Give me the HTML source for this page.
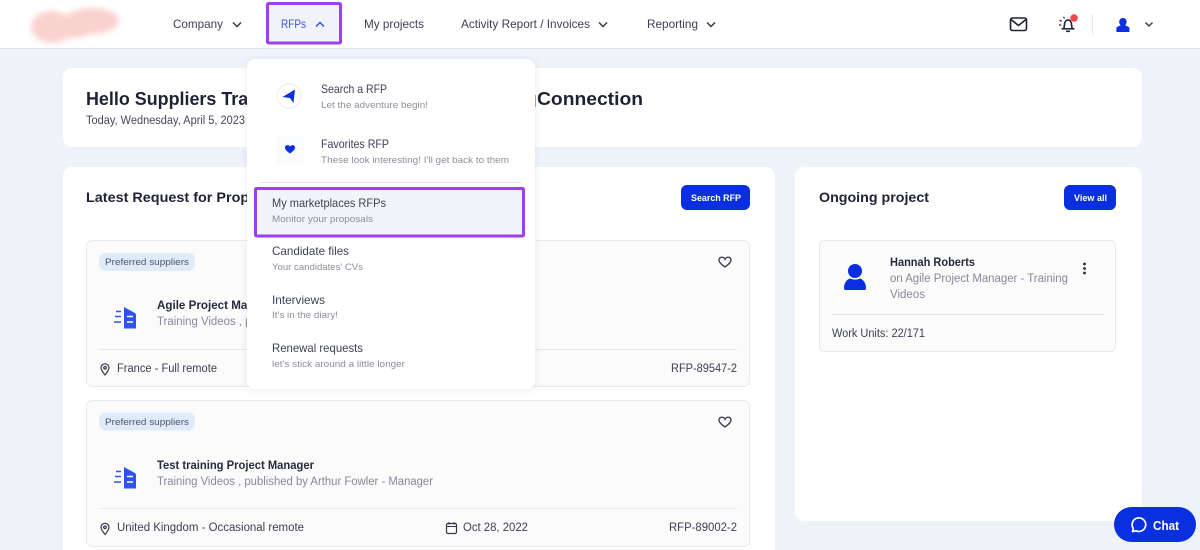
<!DOCTYPE html>
<html lang="en">
<head>
<meta charset="utf-8">
<title>RFPs</title>
<style>
html,body{margin:0;padding:0;width:1200px;height:550px;overflow:hidden;background:#eef3fa}
svg{display:block;font-family:"Liberation Sans",sans-serif}
.n{font-size:12px;fill:#3c3f55}
.t{font-size:12px;fill:#3f4258}
.s{font-size:9.5px;fill:#8b8e9c}
.h{font-size:14px;font-weight:bold;fill:#1f2233}
.b{font-size:11.5px;font-weight:bold;fill:#262a3c}
.g{font-size:11.5px;fill:#85889a}
.d{font-size:11.5px;fill:#3c3f55}
.w{font-size:9.5px;font-weight:bold;fill:#fff}
</style>
</head>
<body>
<svg width="1200" height="550" viewBox="0 0 1200 550" xmlns="http://www.w3.org/2000/svg">
<defs>
<filter id="bl" x="-30%" y="-50%" width="160%" height="200%"><feGaussianBlur stdDeviation="3"/></filter>
<filter id="sh" x="-10%" y="-10%" width="120%" height="120%"><feDropShadow dx="0" dy="1" stdDeviation="4" flood-color="#8a94b0" flood-opacity=".2"/></filter>
<g id="doc">
<path d="M19 0L29 5.500C30.500 6.300 31 7 31 8.500V21.500H19Z" fill="#2f55e6"/>
<path d="M22 9.500h6M22 15h6" stroke="#fff" stroke-width="1.500"/>
<path d="M11 4.500h5M10 9.500h6M9 15h7" stroke="#2f55e6" stroke-width="1.500" fill="none"/>
</g>
<path id="heart" d="M0 2.300C-1.500-.8-6-.3-6 3.200C-6 5.800-2.500 8 0 10C2.500 8 6 5.800 6 3.200C6-.3 1.500-.8 0 2.300Z" fill="none" stroke="#33364a" stroke-width="1.300"/>
<g id="pin" fill="none" stroke="#33364a" stroke-width="1.200"><path d="M0 10C-2.500 7-4 5-4 2.800A4 4 0 0 1 4 2.800C4 5 2.500 7 0 10Z"/><circle cx="0" cy="2.800" r="1.300"/></g>
</defs>

<rect width="1200" height="550" fill="#eef3fa"/>

<!-- header -->
<rect width="1200" height="48" fill="#fff"/>
<rect y="48" width="1200" height="1" fill="#dfe3ea"/>
<g filter="url(#bl)" fill="#f9d2cf">
<ellipse cx="52" cy="27" rx="21" ry="16"/>
<ellipse cx="92" cy="21" rx="27" ry="13"/>
<ellipse cx="70" cy="27" rx="28" ry="11"/>
</g>

<text class="n" x="173" y="28" textLength="50" lengthAdjust="spacingAndGlyphs">Company</text>
<path d="M233 22.500l4 4 4-4" fill="none" stroke="#33364a" stroke-width="1.500"/>
<rect x="267.500" y="3.500" width="73" height="39.500" rx="1" fill="#f1f3fb" stroke="#9b3ff0" stroke-width="3"/>
<text class="n" x="281" y="28" textLength="25" lengthAdjust="spacingAndGlyphs" style="fill:#3b50e8">RFPs</text>
<path d="M316 26.500l4-4 4 4" fill="none" stroke="#3b50e8" stroke-width="1.500"/>
<text class="n" x="364" y="28" textLength="60" lengthAdjust="spacingAndGlyphs">My projects</text>
<text class="n" x="461" y="28" textLength="129" lengthAdjust="spacingAndGlyphs">Activity Report / Invoices</text>
<path d="M599 22.500l4 4 4-4" fill="none" stroke="#33364a" stroke-width="1.500"/>
<text class="n" x="647" y="28" textLength="51" lengthAdjust="spacingAndGlyphs">Reporting</text>
<path d="M707 22.500l4 4 4-4" fill="none" stroke="#33364a" stroke-width="1.500"/>

<rect x="1010.500" y="18" width="16" height="12.500" rx="2" fill="none" stroke="#1f2233" stroke-width="1.600"/>
<path d="M1011 19.500l7.500 6 7.500-6" fill="none" stroke="#1f2233" stroke-width="1.600"/>
<path d="M1061.500 28.800h13M1063.500 28.800c1.200-2 .8-4 1.300-6 .5-1.900 2-2.800 3.200-2.800s2.700.9 3.200 2.800c.5 2 .1 4 1.300 6" fill="none" stroke="#2a2d40" stroke-width="1.700"/>
<path d="M1066 31.300h4" stroke="#2a2d40" stroke-width="1.600"/>
<path d="M1059.500 20l2.200 1.300M1059 25h2.300M1063.500 16.800l1 1.800" stroke="#2a2d40" stroke-width="1.200"/>
<circle cx="1074" cy="18" r="3.800" fill="#f04848"/>
<rect x="1092" y="14" width="1" height="21" fill="#e4e7ee"/>
<path d="M1123 18c2.200 0 3.600 1.700 3.600 3.900 0 1.400-.6 2.600-1.400 3.300l3.300 1.700c.6.300.9.800.9 1.500V32h-13v-3.600c0-.7.300-1.200.9-1.500l3.300-1.700c-.8-.7-1.400-1.900-1.400-3.300 0-2.200 1.600-3.900 3.800-3.900z" fill="#0a2fe0"/>
<path d="M1145.500 22.500l3.500 3.500 3.500-3.500" fill="none" stroke="#33364a" stroke-width="1.400"/>

<!-- welcome card -->
<rect x="63" y="68" width="1079" height="79" rx="9" fill="#fff"/>
<text x="86" y="105" font-size="18" font-weight="bold" fill="#1f2233" textLength="205" lengthAdjust="spacingAndGlyphs">Hello Suppliers Training</text>
<text x="537" y="105" font-size="18" font-weight="bold" fill="#1f2233" textLength="106" lengthAdjust="spacingAndGlyphs">Connection</text>
<rect x="534.500" y="95" width="1" height="12" fill="#3b4a8a"/>
<text x="86" y="124" font-size="11.500" fill="#44475a" textLength="159" lengthAdjust="spacingAndGlyphs">Today, Wednesday, April 5, 2023</text>

<!-- left panel -->
<rect x="63" y="167" width="712" height="400" rx="9" fill="#fff"/>
<text class="h" x="86" y="202" textLength="200" lengthAdjust="spacingAndGlyphs">Latest Request for Proposals</text>
<rect x="681" y="185" width="69" height="25" rx="6" fill="#0a2fe0"/>
<text class="w" x="691" y="201" textLength="50" lengthAdjust="spacingAndGlyphs">Search RFP</text>

<!-- rfp card 1 -->
<rect x="86.500" y="240.500" width="663" height="146" rx="6" fill="#fbfbfc" stroke="#e6e9f0"/>
<rect x="99" y="253" width="96" height="18" rx="7" fill="#dfeafb"/>
<text x="105" y="265" font-size="9.500" fill="#50546a" textLength="84" lengthAdjust="spacingAndGlyphs">Preferred suppliers</text>
<use href="#heart" x="725" y="257"/>
<use href="#doc" x="105" y="307"/>
<text class="b" x="157" y="309" textLength="122" lengthAdjust="spacingAndGlyphs">Agile Project Manager</text>
<text class="g" x="157" y="325" textLength="137" lengthAdjust="spacingAndGlyphs">Training Videos , published</text>
<rect x="99" y="349" width="638" height="1" fill="#e4e7ee"/>
<use href="#pin" x="105" y="365"/>
<text class="d" x="117" y="372" textLength="100" lengthAdjust="spacingAndGlyphs">France - Full remote</text>
<text class="d" x="671" y="372" textLength="66" lengthAdjust="spacingAndGlyphs">RFP-89547-2</text>

<!-- rfp card 2 -->
<rect x="86.500" y="400.500" width="663" height="146" rx="6" fill="#fbfbfc" stroke="#e6e9f0"/>
<rect x="99" y="412.500" width="96" height="18" rx="7" fill="#dfeafb"/>
<text x="105" y="425" font-size="9.500" fill="#50546a" textLength="84" lengthAdjust="spacingAndGlyphs">Preferred suppliers</text>
<use href="#heart" x="725" y="417"/>
<use href="#doc" x="105" y="467"/>
<text class="b" x="157" y="469" textLength="157" lengthAdjust="spacingAndGlyphs">Test training Project Manager</text>
<text class="g" x="157" y="485" textLength="276" lengthAdjust="spacingAndGlyphs">Training Videos , published by Arthur Fowler - Manager</text>
<rect x="99" y="508" width="638" height="1" fill="#e4e7ee"/>
<use href="#pin" x="105" y="524.500"/>
<text class="d" x="117" y="531" textLength="187" lengthAdjust="spacingAndGlyphs">United Kingdom - Occasional remote</text>
<rect x="446.500" y="523.500" width="10" height="10" rx="1.500" fill="none" stroke="#33364a" stroke-width="1.200"/>
<path d="M446.500 526.500h10M449 522v2.500M454 522v2.500" stroke="#33364a" stroke-width="1.100"/>
<text class="d" x="463" y="531" textLength="65" lengthAdjust="spacingAndGlyphs">Oct 28, 2022</text>
<text class="d" x="669" y="531" textLength="68" lengthAdjust="spacingAndGlyphs">RFP-89002-2</text>

<!-- right panel -->
<rect x="795" y="167" width="347" height="354" rx="9" fill="#fff"/>
<text class="h" x="819" y="202" textLength="110" lengthAdjust="spacingAndGlyphs">Ongoing project</text>
<rect x="1064" y="185" width="52" height="25" rx="6" fill="#0a2fe0"/>
<text class="w" x="1074" y="201" textLength="33" lengthAdjust="spacingAndGlyphs">View all</text>
<rect x="819.500" y="240.500" width="296" height="111" rx="5" fill="#fbfbfc" stroke="#e6e9f0"/>
<circle cx="855" cy="271" r="7" fill="#0a2fe0"/>
<path d="M846 290c-1.300 0-2-.6-2-1.800 0-5 2.500-8.700 6-9.700 3 1.500 7 1.500 10 0 3.500 1 6 4.700 6 9.700 0 1.200-.7 1.800-2 1.800z" fill="#0a2fe0"/>
<text class="b" x="890" y="266" textLength="85" lengthAdjust="spacingAndGlyphs">Hannah Roberts</text>
<text class="g" x="890" y="282" textLength="178" lengthAdjust="spacingAndGlyphs">on Agile Project Manager - Training</text>
<text class="g" x="890" y="298" textLength="35" lengthAdjust="spacingAndGlyphs">Videos</text>
<circle cx="1084.500" cy="264" r="1.400" fill="#262a3c"/><circle cx="1084.500" cy="268.500" r="1.400" fill="#262a3c"/><circle cx="1084.500" cy="273" r="1.400" fill="#262a3c"/>
<rect x="832" y="314" width="272" height="1" fill="#e2e5ec"/>
<text class="d" x="832" y="337" textLength="93" lengthAdjust="spacingAndGlyphs">Work Units: 22/171</text>

<!-- dropdown -->
<rect x="247" y="59" width="288" height="330" rx="8" fill="#fff" filter="url(#sh)"/>
<circle cx="289" cy="96" r="12" fill="#fff" stroke="#f0f2f8" stroke-width="1.500"/>
<path d="M282.500 97l12.500-7.500-1.500 13.500-3.500-5z" fill="#0a2fe0"/>
<rect x="276" y="136" width="28" height="29" fill="#fafbfd"/>
<path d="M290 153.500c-3-2.200-5-3.700-5-6 0-2.600 3.500-3.300 5-1 1.500-2.300 5-1.600 5 1 0 2.300-2 3.800-5 6z" fill="#0a2fe0"/>
<text class="t" x="321" y="93" textLength="66" lengthAdjust="spacingAndGlyphs">Search a RFP</text>
<text class="s" x="321" y="108" textLength="107" lengthAdjust="spacingAndGlyphs">Let the adventure begin!</text>
<text class="t" x="321" y="148" textLength="68" lengthAdjust="spacingAndGlyphs">Favorites RFP</text>
<text class="s" x="321" y="163" textLength="188" lengthAdjust="spacingAndGlyphs">These look interesting! I'll get back to them</text>
<rect x="259" y="182" width="263" height="1" fill="#e4e6ec"/>
<rect x="255.500" y="188.500" width="268" height="47.500" rx="1" fill="#f2f4f9" stroke="#9b3ff0" stroke-width="3"/>
<text class="t" x="272" y="207" textLength="114" lengthAdjust="spacingAndGlyphs">My marketplaces RFPs</text>
<text class="s" x="272" y="222" textLength="101" lengthAdjust="spacingAndGlyphs">Monitor your proposals</text>
<text class="t" x="272" y="255" textLength="77" lengthAdjust="spacingAndGlyphs">Candidate files</text>
<text class="s" x="272" y="270" textLength="91" lengthAdjust="spacingAndGlyphs">Your candidates' CVs</text>
<text class="t" x="272" y="304" textLength="53" lengthAdjust="spacingAndGlyphs">Interviews</text>
<text class="s" x="272" y="318" textLength="66" lengthAdjust="spacingAndGlyphs">It's in the diary!</text>
<text class="t" x="272" y="352" textLength="91" lengthAdjust="spacingAndGlyphs">Renewal requests</text>
<text class="s" x="272" y="367" textLength="133" lengthAdjust="spacingAndGlyphs">let's stick around a little longer</text>

<!-- chat -->
<rect x="1114" y="507" width="82" height="35" rx="17.500" fill="#0a2fe0"/>
<path d="M1132.500 531.500l.8-3a6.800 6.800 0 1 1 2.700 2.300z" fill="none" stroke="#fff" stroke-width="1.700" stroke-linejoin="round"/>
<text x="1153" y="530" font-size="12.500" font-weight="bold" fill="#fff" textLength="26" lengthAdjust="spacingAndGlyphs">Chat</text>
</svg>
</body>
</html>
